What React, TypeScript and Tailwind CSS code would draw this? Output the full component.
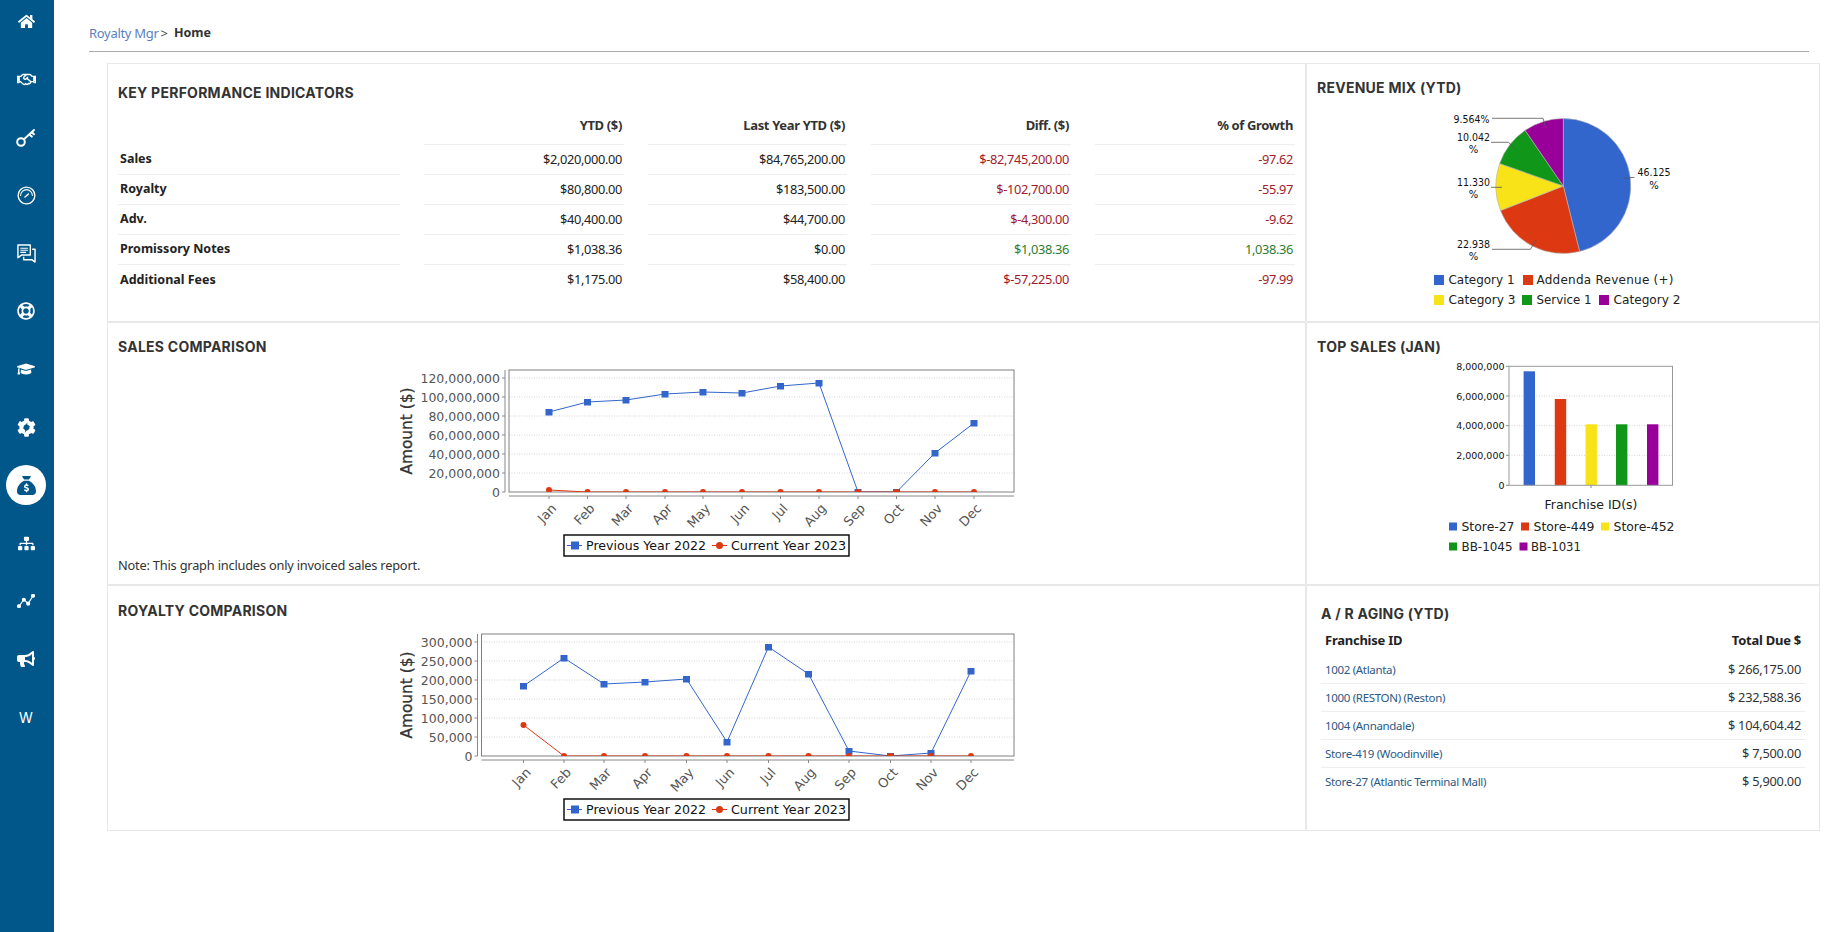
import { FaHome, FaRegHandshake, FaRegLifeRing, FaGraduationCap, FaCog, FaSitemap, FaBullhorn } from "react-icons/fa";
import { FaSackDollar } from "react-icons/fa6";

const BLUE = "#3366cc";
const RED = "#dc3912";
const YELLOW = "#f7e318";
const GREEN = "#109618";
const PURPLE = "#990099";
const DEJAVU = "'DejaVu Sans', sans-serif";

const months = ["Jan", "Feb", "Mar", "Apr", "May", "Jun", "Jul", "Aug", "Sep", "Oct", "Nov", "Dec"];

const kpiRows = [
  { label: "Sales", ytd: "$2,020,000.00", last: "$84,765,200.00", diff: "$-82,745,200.00", growth: "-97.62", up: false },
  { label: "Royalty", ytd: "$80,800.00", last: "$183,500.00", diff: "$-102,700.00", growth: "-55.97", up: false },
  { label: "Adv.", ytd: "$40,400.00", last: "$44,700.00", diff: "$-4,300.00", growth: "-9.62", up: false },
  { label: "Promissory Notes", ytd: "$1,038.36", last: "$0.00", diff: "$1,038.36", growth: "1,038.36", up: true },
  { label: "Additional Fees", ytd: "$1,175.00", last: "$58,400.00", diff: "$-57,225.00", growth: "-97.99", up: false },
];

const agingRows = [
  ["1002 (Atlanta)", "$ 266,175.00"],
  ["1000 (RESTON) (Reston)", "$ 232,588.36"],
  ["1004 (Annandale)", "$ 104,604.42"],
  ["Store-419 (Woodinville)", "$ 7,500.00"],
  ["Store-27 (Atlantic Terminal Mall)", "$ 5,900.00"],
];

function KeyIcon() {
  return (
    <svg width="20" height="20" viewBox="0 0 20 20" fill="none" stroke="white" strokeWidth="2" strokeLinecap="round">
      <circle cx="5" cy="15" r="3.8" />
      <path d="M8 12.2 18 3M13.4 7.4l2.4 2.2M15.8 5.2l2.2 2" />
    </svg>
  );
}

function GaugeIcon() {
  return (
    <svg width="19" height="19" viewBox="0 0 20 20" fill="none" stroke="white" strokeLinecap="round">
      <circle cx="10" cy="10" r="8.8" strokeWidth="1.4" />
      <path d="M3.8 10a6.2 6.2 0 0 1 12.4 0" strokeWidth="1.1" />
      <path d="M8.4 11.6 12 8.4" strokeWidth="1.6" />
    </svg>
  );
}

function ChatIcon() {
  return (
    <svg width="19" height="19" viewBox="0 0 20 20" fill="none" stroke="white" strokeWidth="1.5" strokeLinejoin="round">
      <path d="M1 1h13v10.5H5L1 14.5z" />
      <path d="M16 5.5h3V19l-3.5-2.5H7v-3" />
      <path d="M3.5 4.4h8M3.5 6.6h8M3.5 8.8h6" strokeWidth="1.1" />
    </svg>
  );
}

function GearBoltIcon() {
  return (
    <span className="relative flex h-5 w-5 items-center justify-center">
      <FaCog size={19} color="white" />
      <svg className="absolute left-[6.5px] top-[4.5px]" width="7" height="11" viewBox="0 0 8 12" fill="#01578a">
        <path d="M5 0 0 7h3l-1 5 6-7.5H4.6z" />
      </svg>
    </span>
  );
}

function TrendIcon() {
  return (
    <svg width="18" height="14" viewBox="0 0 20 16" fill="white" stroke="white" strokeWidth="1.3">
      <path d="M2 14 7.5 6.5 12.5 11 18 2" fill="none" />
      <circle cx="2" cy="14" r="1.7" />
      <circle cx="7.5" cy="6.5" r="1.7" />
      <circle cx="12.5" cy="11" r="1.7" />
      <circle cx="18" cy="2" r="1.7" />
    </svg>
  );
}

function Sidebar() {
  return (
    <aside className="flex w-[54px] shrink-0 flex-col items-center gap-[38px] bg-[#01578a] pr-[2px] pt-[11px] text-white">
      <div className="flex h-5 items-center"><FaHome size={17} /></div>
      <div className="flex h-5 items-center"><FaRegHandshake size={19} /></div>
      <div className="flex h-5 items-center"><KeyIcon /></div>
      <div className="flex h-5 items-center"><GaugeIcon /></div>
      <div className="flex h-5 items-center"><ChatIcon /></div>
      <div className="flex h-5 items-center"><FaRegLifeRing size={18} /></div>
      <div className="flex h-5 items-center"><FaGraduationCap size={18} /></div>
      <div className="flex h-5 items-center"><GearBoltIcon /></div>
      <div className="-my-[10px] flex h-10 w-10 items-center justify-center rounded-full bg-white"><FaSackDollar size={19} color="#01578a" /></div>
      <div className="flex h-5 items-center"><FaSitemap size={17} /></div>
      <div className="flex h-5 items-center"><TrendIcon /></div>
      <div className="flex h-5 items-center"><FaBullhorn size={18} /></div>
      <div className="flex h-5 items-center font-['Inter',sans-serif] text-[14px] font-normal">W</div>
    </aside>
  );
}

function PanelTitle({ children }: { children: string }) {
  return <h2 className="font-['Inter',sans-serif] text-[14px] leading-5 font-bold tracking-[0.25px] text-[#333]">{children}</h2>;
}

function KpiTable() {
  const cell = "flex h-[30px] items-center justify-end border-b border-[#eeeeee] pr-[2px] font-['Noto_Sans',sans-serif] text-[12.8px] tracking-[-0.35px]";
  const head = "flex h-[33px] items-center justify-end border-b border-[#eeeeee] pb-[4px] pr-[2px] font-['Noto_Sans',sans-serif] text-[13px] font-bold tracking-[-0.35px] text-[#333]";
  return (
    <div className="mt-[9px] grid grid-cols-[282px_200px_199px_200px_200px] gap-x-6">
      <div className="h-[33px]" />
      <div className={head}>YTD ($)</div>
      <div className={head}>Last Year YTD ($)</div>
      <div className={head}>Diff. ($)</div>
      <div className={head}>% of Growth</div>
      {kpiRows.map((row, i) => {
        const line = i === kpiRows.length - 1 ? "border-b-0" : "";
        const tone = row.up ? "text-[#2e7d32]" : "text-[#a01c2c]";
        return (
          <div key={row.label} className="contents">
            <div className={`flex h-[30px] items-center border-b border-[#eeeeee] pl-[2px] font-['Noto_Sans',sans-serif] text-[12.5px] font-bold text-[#222] ${line}`}>{row.label}</div>
            <div className={`${cell} text-[#222] ${line}`}>{row.ytd}</div>
            <div className={`${cell} text-[#222] ${line}`}>{row.last}</div>
            <div className={`${cell} ${line} ${tone}`}>{row.diff}</div>
            <div className={`${cell} ${line} ${tone}`}>{row.growth}</div>
          </div>
        );
      })}
    </div>
  );
}

type LineChartProps = {
  id: string;
  top: number;
  plotLeft: number;
  plotTop: number;
  plotBottom: number;
  axisY: number;
  axisLeft: number;
  ticks: { label: string; y: number }[];
  xs: number[];
  blue: number[];
  red: number[];
  titleY: number;
  legendTop: number;
};

function LineChart(p: LineChartProps) {
  const plotRight = 1014;
  return (
    <svg className="block" width="620" height="200" viewBox={`400 ${p.top} 620 200`} fontFamily={DEJAVU}>
      <defs>
        <clipPath id={p.id}>
          <rect x={p.plotLeft} y={p.plotTop} width={plotRight - p.plotLeft} height={p.plotBottom - p.plotTop} />
        </clipPath>
      </defs>
      {p.ticks.map((t) => (
        <g key={t.label}>
          {t.label !== "0" && <line x1={p.plotLeft} x2={plotRight} y1={t.y} y2={t.y} stroke="#d4d4d4" strokeDasharray="1 1.5" />}
          <line x1={p.axisLeft - 3} x2={p.axisLeft} y1={t.y} y2={t.y} stroke="#888" />
          <text x={p.axisLeft - 5} y={t.y + 4.5} textAnchor="end" fontSize="12.5" fill="#555">{t.label}</text>
        </g>
      ))}
      <line x1={p.axisLeft} x2={p.axisLeft} y1={p.plotTop} y2={p.plotBottom} stroke="#888" />
      <rect x={p.plotLeft} y={p.plotTop} width={plotRight - p.plotLeft} height={p.plotBottom - p.plotTop} fill="none" stroke="#808080" />
      <line x1={p.plotLeft} x2={plotRight} y1={p.axisY} y2={p.axisY} stroke="#888" />
      <g clipPath={`url(#${p.id})`}>
        <polyline points={p.xs.map((x, i) => `${x},${p.blue[i]}`).join(" ")} fill="none" stroke={BLUE} />
        <polyline points={p.xs.map((x, i) => `${x},${p.red[i]}`).join(" ")} fill="none" stroke={RED} />
        {p.xs.map((x, i) => <rect key={x} x={x - 3.5} y={p.blue[i] - 3} width="7" height="6.5" fill={BLUE} />)}
        {p.xs.map((x, i) => <ellipse key={x} cx={x} cy={p.red[i]} rx="3" ry="3" fill={RED} />)}
      </g>
      {p.xs.map((x, i) => (
        <g key={months[i]}>
          <line x1={x} x2={x} y1={p.axisY} y2={p.axisY + 3} stroke="#888" />
          <text x={x + 8} y={p.axisY + 13} textAnchor="end" fontSize="13" fill="#555" transform={`rotate(-47 ${x + 8} ${p.axisY + 13})`}>{months[i]}</text>
        </g>
      ))}
      <text x={412} y={p.titleY} textAnchor="middle" fontSize="16" fill="#333" stroke="#333" strokeWidth="0.3" textLength="87" lengthAdjust="spacingAndGlyphs" transform={`rotate(-90 412 ${p.titleY})`}>Amount ($)</text>
      <rect x="564" y={p.legendTop} width="285" height="21" fill="white" stroke="black" strokeWidth="1.4" />
      <line x1="567" x2="582" y1={p.legendTop + 10.5} y2={p.legendTop + 10.5} stroke={BLUE} />
      <rect x="571" y={p.legendTop + 6.5} width="8" height="8" fill={BLUE} />
      <text x="586" y={p.legendTop + 15} fontSize="12.5" fill="#111" textLength="120" lengthAdjust="spacingAndGlyphs">Previous Year 2022</text>
      <line x1="712" x2="727" y1={p.legendTop + 10.5} y2={p.legendTop + 10.5} stroke={RED} />
      <circle cx="719.5" cy={p.legendTop + 10.5} r="3.5" fill={RED} />
      <text x="731" y={p.legendTop + 15} fontSize="12.5" fill="#111" textLength="115" lengthAdjust="spacingAndGlyphs">Current Year 2023</text>
    </svg>
  );
}

const salesX = [549, 587.5, 626, 665, 703, 742, 780.5, 819, 858, 896.5, 935, 974];
const salesBlue = [412, 402, 400, 394, 392, 393, 386, 383, 492, 492, 453, 423];
const salesRed = [490, 492, 492, 492, 492, 492, 492, 492, 492, 492, 492, 492];
const salesTicks = ["120,000,000", "100,000,000", "80,000,000", "60,000,000", "40,000,000", "20,000,000", "0"].map((label, i) => ({ label, y: 378 + i * 19 }));

const royaltyX = [523.5, 564, 604, 645, 686.5, 727, 768.5, 808.5, 849, 890.5, 931, 971];
const royaltyBlue = [686, 658, 684, 682, 679, 742, 647, 674, 751, 756, 753, 671];
const royaltyRed = [725, 756, 756, 756, 756, 756, 756, 756, 756, 756, 756, 756];
const royaltyTicks = ["300,000", "250,000", "200,000", "150,000", "100,000", "50,000", "0"].map((label, i) => ({ label, y: 642 + i * 19 }));

const pieSlices = [
  { value: 46.125, color: BLUE },
  { value: 22.938, color: RED },
  { value: 11.33, color: YELLOW },
  { value: 10.042, color: GREEN },
  { value: 9.564, color: PURPLE },
];

function piePoint(pct: number) {
  const a = (pct / 100) * 2 * Math.PI;
  return [1563.3 + 67.5 * Math.sin(a), 186 - 67.5 * Math.cos(a)];
}

function RevenuePie() {
  let sum = 0;
  const leader = "#555";
  return (
    <svg className="ml-[123px] mt-[2px] block" width="260" height="210" viewBox="1430 100 260 210" fontFamily={DEJAVU}>
      {pieSlices.map((s) => {
        const [x1, y1] = piePoint(sum);
        sum += s.value;
        const [x2, y2] = piePoint(sum);
        return <path key={s.color} d={`M1563.3 186L${x1} ${y1}A67.5 67.5 0 ${s.value > 50 ? 1 : 0} 1 ${x2} ${y2}Z`} fill={s.color} stroke="#b5b5b5" strokeWidth="0.6" />;
      })}
      <g fill="none" stroke={leader} strokeWidth="0.8">
        <path d="M1492 118.3H1543L1546 128" />
        <path d="M1491 142.3H1508.5L1516 149.5" />
        <path d="M1491 187.3H1502" />
        <path d="M1492 249.3H1530.5L1536 240" />
        <path d="M1623 178.3L1634.5 177.3" />
      </g>
      <g fontSize="10" fill="#111" textAnchor="middle">
        <text x="1471.5" y="122.5" textLength="36" lengthAdjust="spacingAndGlyphs">9.564%</text>
        <text x="1473.5" y="140.5" textLength="33" lengthAdjust="spacingAndGlyphs">10.042</text>
        <text x="1473.5" y="153">%</text>
        <text x="1473.5" y="185.5" textLength="33" lengthAdjust="spacingAndGlyphs">11.330</text>
        <text x="1473.5" y="198">%</text>
        <text x="1473.5" y="247.5" textLength="33" lengthAdjust="spacingAndGlyphs">22.938</text>
        <text x="1473.5" y="260">%</text>
        <text x="1654" y="176" textLength="33" lengthAdjust="spacingAndGlyphs">46.125</text>
        <text x="1654" y="188.5">%</text>
      </g>
      <g fontSize="12" fill="#222">
        <rect x="1434" y="275" width="10" height="10" fill={BLUE} />
        <text x="1448.5" y="284" textLength="66" lengthAdjust="spacingAndGlyphs">Category 1</text>
        <rect x="1523" y="275" width="10" height="10" fill={RED} />
        <text x="1536.5" y="284" textLength="137" lengthAdjust="spacing">Addenda Revenue (+)</text>
        <rect x="1434" y="295" width="10" height="10" fill={YELLOW} />
        <text x="1448.5" y="304" textLength="67" lengthAdjust="spacingAndGlyphs">Category 3</text>
        <rect x="1522" y="295" width="10" height="10" fill={GREEN} />
        <text x="1536.5" y="304" textLength="55" lengthAdjust="spacingAndGlyphs">Service 1</text>
        <rect x="1599" y="295" width="10" height="10" fill={PURPLE} />
        <text x="1613.5" y="304" textLength="67" lengthAdjust="spacingAndGlyphs">Category 2</text>
      </g>
    </svg>
  );
}

const bars = [
  { x: 1523.6, top: 371.3, color: BLUE },
  { x: 1554.8, top: 399, color: RED },
  { x: 1585.5, top: 424.3, color: YELLOW },
  { x: 1616, top: 424.3, color: GREEN },
  { x: 1647, top: 424.3, color: PURPLE },
];

function TopSalesChart() {
  const ticks = [["8,000,000", 366.3], ["6,000,000", 396], ["4,000,000", 425.7], ["2,000,000", 455.3], ["0", 485.3]] as const;
  return (
    <svg className="ml-[133px] block" width="250" height="195" viewBox="1440 360 250 195" fontFamily={DEJAVU}>
      {ticks.map(([label, y]) => (
        <g key={label}>
          {label !== "0" && label !== "8,000,000" && <line x1="1509" x2="1672.5" y1={y} y2={y} stroke="#d9d0d6" strokeDasharray="1 1.5" />}
          <line x1="1506" x2="1509" y1={y} y2={y} stroke="#888" />
          <text x="1504.5" y={y + 3.5} textAnchor="end" fontSize="9.5" fill="#111">{label}</text>
        </g>
      ))}
      {bars.map((b) => <rect key={b.color} x={b.x} y={b.top} width="11.4" height={485.3 - b.top} fill={b.color} />)}
      <rect x="1509" y="366.3" width="163.5" height="119" fill="none" stroke="#999" />
      <line x1="1591" x2="1591" y1="485.3" y2="488" stroke="#888" />
      <text x="1591" y="508.5" textAnchor="middle" fontSize="12" fill="#222" textLength="93" lengthAdjust="spacingAndGlyphs">Franchise ID(s)</text>
      <g fontSize="12" fill="#222">
        <rect x="1449" y="522.5" width="8" height="8" fill={BLUE} />
        <text x="1461.5" y="531" textLength="53" lengthAdjust="spacingAndGlyphs">Store-27</text>
        <rect x="1521" y="522.5" width="8" height="8" fill={RED} />
        <text x="1533.5" y="531" textLength="61" lengthAdjust="spacingAndGlyphs">Store-449</text>
        <rect x="1601" y="522.5" width="8" height="8" fill={YELLOW} />
        <text x="1613.5" y="531" textLength="61" lengthAdjust="spacingAndGlyphs">Store-452</text>
        <rect x="1449" y="542.5" width="8" height="8" fill={GREEN} />
        <text x="1461.5" y="551" textLength="51" lengthAdjust="spacingAndGlyphs">BB-1045</text>
        <rect x="1519.5" y="542.5" width="8" height="8" fill={PURPLE} />
        <text x="1531" y="551" textLength="50" lengthAdjust="spacingAndGlyphs">BB-1031</text>
      </g>
    </svg>
  );
}

function AgingTable() {
  return (
    <div className="mt-[2px] font-['Noto_Sans',sans-serif]">
      <div className="flex h-[30px] items-center justify-between px-[4px] text-[13px] font-bold tracking-[-0.25px] text-[#222]">
        <span>Franchise ID</span>
        <span>Total Due $</span>
      </div>
      {agingRows.map(([id, amount], i) => (
        <div key={id} className={`flex h-[28px] items-center justify-between px-[4px] ${i < agingRows.length - 1 ? "border-b border-[#eeeeee]" : ""}`}>
          <span className="text-[11.5px] tracking-[-0.32px] text-[#2a5a85]">{id}</span>
          <span className="text-[12.8px] tracking-[-0.25px] text-[#333]">{amount}</span>
        </div>
      ))}
    </div>
  );
}

export default function App() {
  return (
    <div className="flex h-[932px] w-[1842px] overflow-hidden bg-white">
      <Sidebar />
      <main className="pl-[35px]">
        <div className="flex h-[52px] w-[1720px] items-start border-b border-[#aaaaaa] pt-[23px] font-['Noto_Sans',sans-serif] text-[13px] leading-5">
          <span className="text-[#5b7fbf] tracking-[-0.3px]">Royalty Mgr</span>
          <span className="ml-[2px] text-[#444]">&gt;</span>
          <span className="ml-[6px] text-[12.5px] font-bold text-[#333]">Home</span>
        </div>
        <div className="ml-[18px] mt-[11px] grid w-[1713px] grid-cols-[1199px_514px] grid-rows-[259px_263px_246px]">
          <section className="border border-[#e8e8e8] px-[10px] pt-[19px]">
            <PanelTitle>KEY PERFORMANCE INDICATORS</PanelTitle>
            <KpiTable />
          </section>
          <section className="border border-[#e8e8e8] pl-[10px] pt-[14px]">
            <PanelTitle>REVENUE MIX (YTD)</PanelTitle>
            <div className="-ml-[10px]"><RevenuePie /></div>
          </section>
          <section className="border border-[#e8e8e8] px-[10px] pt-[14px]">
            <PanelTitle>SALES COMPARISON</PanelTitle>
            <div className="ml-[282px] mt-[3px] h-[198px]">
              <LineChart id="sales-clip" top={360} plotLeft={509} plotTop={370} plotBottom={492} axisY={496} axisLeft={505} ticks={salesTicks} xs={salesX} blue={salesBlue} red={salesRed} titleY={431} legendTop={535} />
            </div>
            <p className="font-['Noto_Sans',sans-serif] text-[12.8px] leading-[14px] tracking-[-0.2px] text-[#333]">Note: This graph includes only invoiced sales report.</p>
          </section>
          <section className="border border-[#e8e8e8] pl-[10px] pt-[14px]">
            <PanelTitle>TOP SALES (JAN)</PanelTitle>
            <div className="-ml-[10px] mt-[3px]"><TopSalesChart /></div>
          </section>
          <section className="border border-[#e8e8e8] px-[10px] pt-[15px]">
            <PanelTitle>ROYALTY COMPARISON</PanelTitle>
            <div className="ml-[282px] mt-[4px]">
              <LineChart id="royalty-clip" top={625} plotLeft={481.5} plotTop={634} plotBottom={756} axisY={760} axisLeft={477.5} ticks={royaltyTicks} xs={royaltyX} blue={royaltyBlue} red={royaltyRed} titleY={695} legendTop={799} />
            </div>
          </section>
          <section className="border border-[#e8e8e8] px-[14px] pt-[18px]">
            <PanelTitle>A / R AGING (YTD)</PanelTitle>
            <AgingTable />
          </section>
        </div>
      </main>
    </div>
  );
}
